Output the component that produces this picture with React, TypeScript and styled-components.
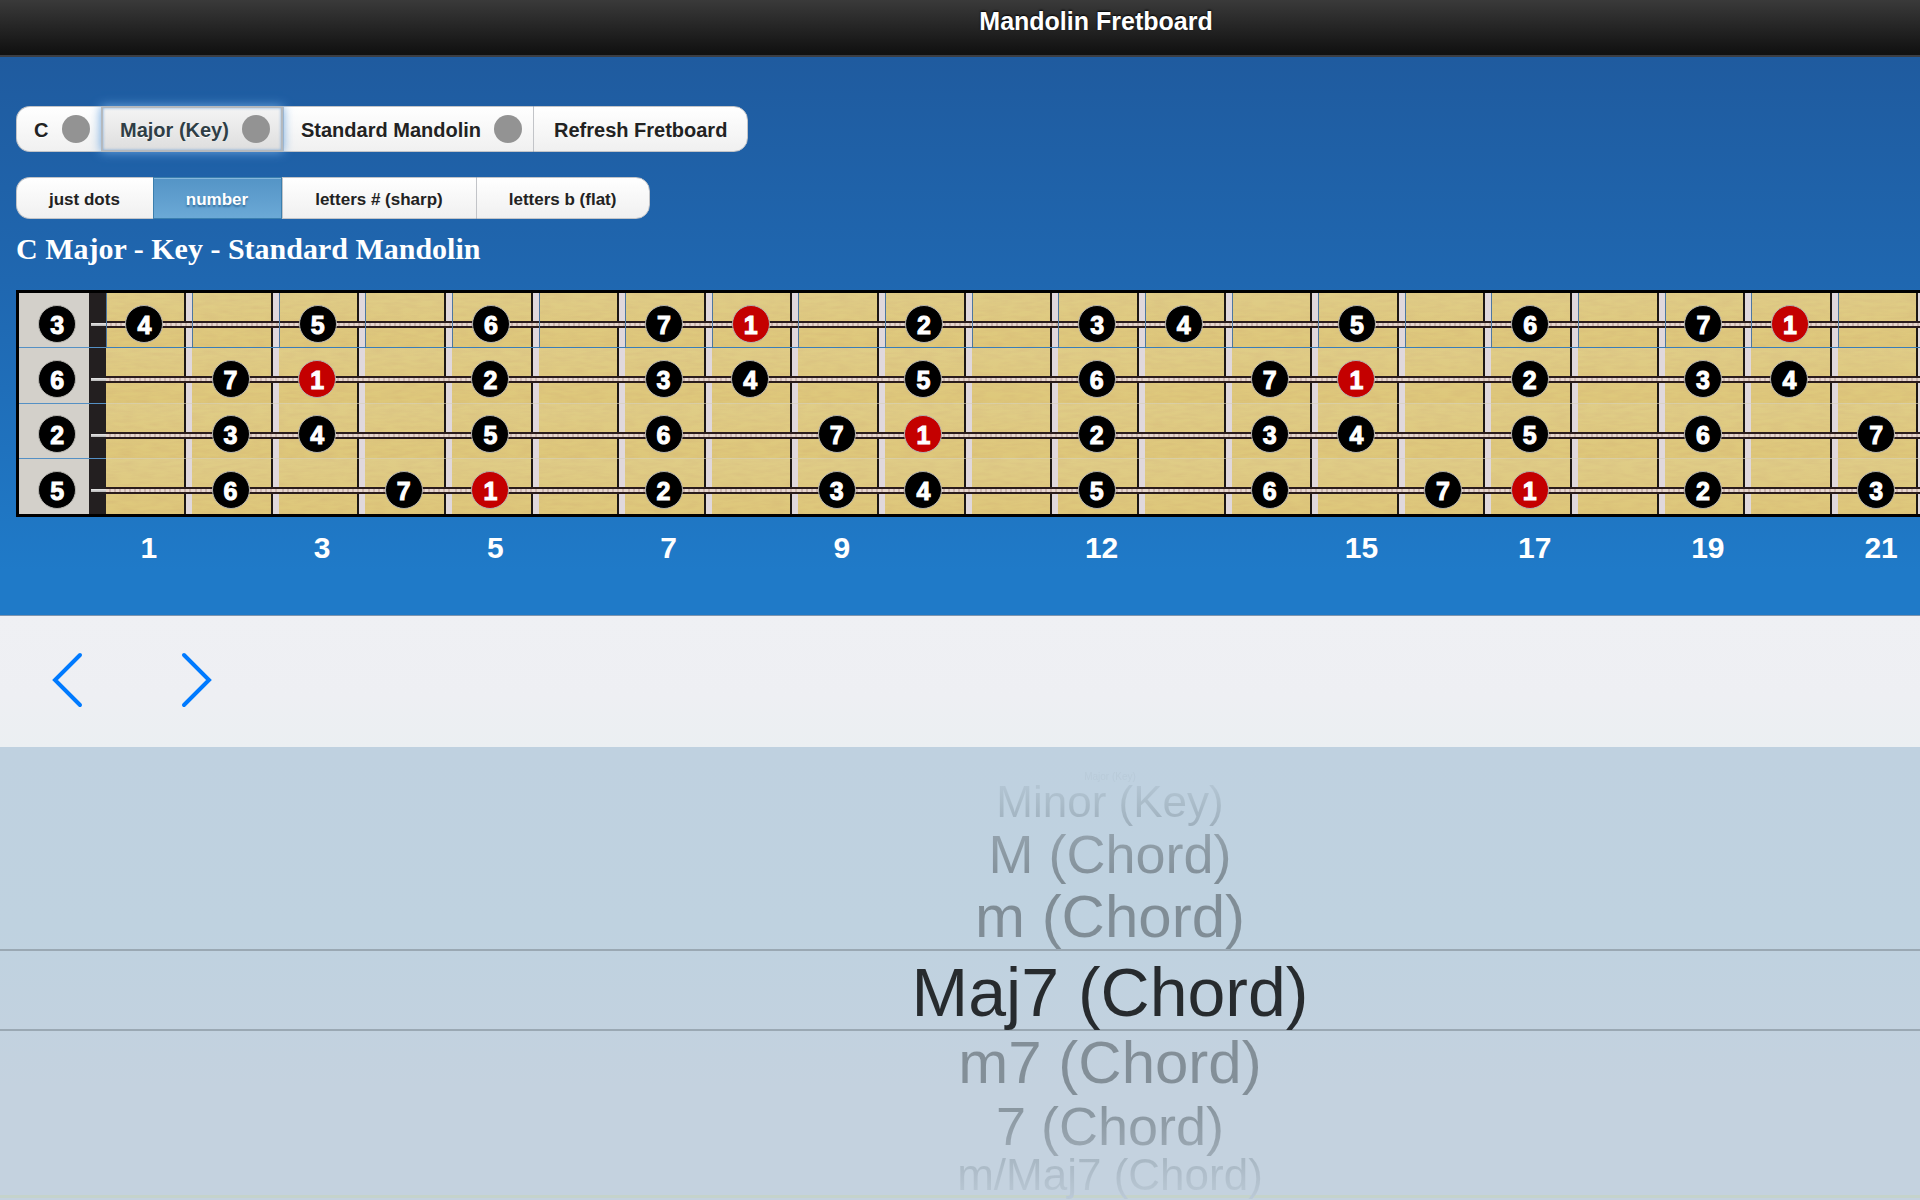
import React, { useState } from "react";
import styled, { createGlobalStyle, css } from "styled-components";

const sans = `"Liberation Sans", Arial, Helvetica, sans-serif`;
const serif = `"Liberation Serif", "Times New Roman", serif`;

const GlobalStyle = createGlobalStyle`
  *, *::before, *::after { box-sizing: border-box; }
  body { margin: 0; background: #c3d2df; font-family: ${sans}; }
`;

const Page = styled.div`
  min-height: 100vh;
  display: flex;
  flex-direction: column;
  overflow: hidden;
`;

const TitleBar = styled.header`
  height: 57px;
  padding: 7px 0 0 272px;
  background: linear-gradient(#3a3a3a, #111 96%);
  border-bottom: 2px solid #3b3d42;
`;

const Title = styled.h1`
  margin: 0;
  text-align: center;
  color: #fff;
  font-size: 25px;
  line-height: 28px;
  text-shadow: 0 -1px 2px #000;
`;

const Stage = styled.main`
  padding: 49px 0 0 16px;
  height: 559px;
  background: linear-gradient(#1f5b9f, #1f67b0 40%, #1f7ac8 92%);
  border-bottom: 1px solid #7d95b0;
`;

const Controls = styled.form`
  display: flex;
  flex-direction: column;
  align-items: flex-start;
  gap: 25px;
`;

const Group = styled.div`
  display: flex;
  margin: 0;
  padding: 0;
`;

const segment = css`
  border: 1px solid #c2c4c8;
  border-right-width: 0;
  background: linear-gradient(#fff, #f0f0f0);
  color: #222;
  font-family: ${sans};
  font-weight: bold;
`;

const groupEnds = css`
  &:first-child { border-radius: 14px 0 0 14px; }
  &:last-child { border-radius: 0 14px 14px 0; border-right-width: 1px; }
`;

const Picker = styled.label<{ $active?: boolean }>`
  ${segment}
  ${groupEnds}
  position: relative;
  display: flex;
  height: 46px;
  ${(p) =>
    p.$active &&
    css`
      z-index: 1;
      border: 2px solid #b4b9be;
      background: linear-gradient(#f4f4f4, #dedede);
      box-shadow: 0 0 10px #6aa5e0, inset 0 0 3px #7aa9dc;
    `}
  &::after {
    content: "";
    position: absolute;
    right: 11px;
    top: 50%;
    width: 28px;
    height: 28px;
    margin-top: -14px;
    border-radius: 50%;
    background: #939393;
    pointer-events: none;
  }
`;

const Select = styled.select<{ $active?: boolean }>`
  appearance: none;
  border: 0;
  outline: 0;
  margin: 0;
  padding: 2px 52px 0 17px;
  background: transparent;
  color: ${(p) => (p.$active ? "#2f3e46" : "#222")};
  font-family: ${sans};
  font-size: 20px;
  font-weight: bold;
  text-shadow: 0 1px 0 #fff;
`;

const RefreshButton = styled.button`
  ${segment}
  ${groupEnds}
  height: 46px;
  padding: 2px 20px 0;
  font-size: 20px;
`;

const HiddenRadio = styled.input`
  position: absolute;
  opacity: 0;
  width: 1px;
  height: 1px;
  margin: 0;
`;

const Tab = styled.label<{ $on: boolean }>`
  ${segment}
  ${groupEnds}
  height: 42px;
  padding: 2px 33px 0 32px;
  font-size: 17px;
  line-height: 40px;
  ${(p) =>
    p.$on &&
    css`
      border-color: #3b7fae;
      border-right-width: 1px;
      background: linear-gradient(#5494c6, #6ba9d6);
      box-shadow: inset 0 1px 0 #86b7dc;
      color: #fff;
      text-shadow: 0 2px 2px #2f6c9c;
    `}
`;

const Heading = styled.h2`
  margin: 13px 0 0;
  color: #fff;
  font-family: ${serif};
  font-size: 30px;
  line-height: 34px;
`;

const Neck = styled.div`
  width: calc(100% + 94px);
  margin-top: 24px;
`;

const Board = styled.div`
  position: relative;
  height: 227px;
  display: grid;
  grid-template-columns: repeat(23, 1fr);
  grid-template-rows: repeat(4, 1fr);
  border: 3px solid #000;
  background: #dec980;
`;

const Grain = styled.svg`
  position: absolute;
  left: 0;
  top: 0;
  width: 100%;
  height: 100%;
`;

const Cell = styled.div<{ $string: number }>`
  position: relative;
  display: flex;
  align-items: center;
  justify-content: center;
  padding: 7px 10px 0 0;
  border-bottom: 1px solid ${(p) => (p.$string === 0 ? "#3a7db8" : "rgba(214, 208, 185, 0.6)")};
  border-left: ${(p) => (p.$string === 0 ? "1px solid rgba(40, 95, 145, 0.8)" : "0")};
  background:
    linear-gradient(#2b1c1c 2px, transparent 2px, transparent 5px, #2b1c1c 5px) 0 28px / 100% 7px no-repeat,
    repeating-linear-gradient(90deg, #e6d6cd 0 3px, #cdb7b0 3px 5px) 0 28px / 100% 7px no-repeat,
    linear-gradient(90deg, transparent calc(100% - 8px), #1d1714 calc(100% - 8px), #1d1714 calc(100% - 6px), #e0d8dc calc(100% - 6px)),
    linear-gradient(rgba(226, 210, 146, 0.4), rgba(222, 196, 112, 0.4));
  &:nth-last-child(-n + 23) { border-bottom: 0; }
`;

const OpenCell = styled(Cell)`
  border-left: 0;
  border-bottom: 1px solid #5590c4;
  background:
    linear-gradient(#e8e8e8, #b9b9b9) 100% 30px / 15px 3px no-repeat,
    linear-gradient(90deg, #d3d0ca calc(100% - 17px), #231f20 calc(100% - 17px));
`;

const Dot = styled.span<{ $root: boolean }>`
  width: 38px;
  height: 38px;
  flex: none;
  border: 1px solid #b5b3ae;
  border-radius: 50%;
  background: ${(p) => (p.$root ? "#c40000" : "#000")};
  color: #fff;
  font-size: 25px;
  font-weight: bold;
  line-height: 38px;
  text-align: center;
  -webkit-text-stroke: 1px #fff;
`;

const Positions = styled.div`
  display: grid;
  grid-template-columns: repeat(23, 1fr);
  padding: 13px 3px 0;
  color: #fff;
  font-size: 30px;
  font-weight: bold;
  line-height: 36px;
  text-align: center;
`;

const Assistant = styled.nav`
  display: flex;
  align-items: center;
  gap: 64px;
  height: 131px;
  padding: 0 32px 5px;
  background: linear-gradient(#eff0f4, #eeeff3 60%, #ebeff2);
`;

const StepButton = styled.button`
  width: 65px;
  height: 65px;
  padding: 0;
  border: 0;
  background: transparent;
  svg { display: block; width: 65px; height: 65px; }
`;

const Wheel = styled.fieldset`
  flex: 1;
  min-width: 0;
  margin: 0;
  padding: 26px 0 0;
  border: 0;
  background: linear-gradient(#bfd1e0, #bfd2e0 40%, #c4d2df 75%, #c4d2df);
`;

const WheelRow = styled.label<{ $height: number; $size: number; $from: string; $to: string }>`
  display: flex;
  align-items: center;
  justify-content: center;
  height: ${(p) => p.$height}px;
  padding-left: 300px;
  font-size: ${(p) => p.$size}px;
  line-height: ${(p) => p.$size + 8}px;
  span {
    background: linear-gradient(${(p) => p.$from}, ${(p) => p.$to});
    background-clip: text;
    -webkit-background-clip: text;
    color: transparent;
  }
`;

const SelectedRow = styled(WheelRow)`
  padding-top: 4px;
  border-top: 2px solid #9aa8b3;
  border-bottom: 2px solid #9aa8b3;
`;

const WheelEdge = styled.div`
  height: 3px;
  margin-top: 2px;
  background: #c5d3cb;
`;

/* Scale degree per fret for each string, open string first. */
const strings: Record<number, number>[] = [
  { 0: 3, 1: 4, 3: 5, 5: 6, 7: 7, 8: 1, 10: 2, 12: 3, 13: 4, 15: 5, 17: 6, 19: 7, 20: 1 },
  { 0: 6, 2: 7, 3: 1, 5: 2, 7: 3, 8: 4, 10: 5, 12: 6, 14: 7, 15: 1, 17: 2, 19: 3, 20: 4 },
  { 0: 2, 2: 3, 3: 4, 5: 5, 7: 6, 9: 7, 10: 1, 12: 2, 14: 3, 15: 4, 17: 5, 19: 6, 21: 7 },
  { 0: 5, 2: 6, 4: 7, 5: 1, 7: 2, 9: 3, 10: 4, 12: 5, 14: 6, 16: 7, 17: 1, 19: 2, 21: 3 },
];
const frets = Array.from({ length: 23 }, (_, i) => i);
const marked = [1, 3, 5, 7, 9, 12, 15, 17, 19, 21];
const modes = ["just dots", "number", "letters # (sharp)", "letters b (flat)"];

const chords = [
  { name: "Major (Key)", height: 8, size: 10, from: "#b9cbd9", to: "#b7c9d7", row: WheelRow },
  { name: "Minor (Key)", height: 42, size: 44, from: "#b8cad8", to: "#9eafbc", row: WheelRow },
  { name: "M (Chord)", height: 62, size: 54, from: "#98a7b2", to: "#7f8c95", row: WheelRow },
  { name: "m (Chord)", height: 64, size: 60, from: "#808d96", to: "#808d96", row: WheelRow },
  { name: "Maj7 (Chord)", height: 82, size: 68, from: "#272b2e", to: "#272b2e", row: SelectedRow },
  { name: "m7 (Chord)", height: 64, size: 60, from: "#838f98", to: "#838f98", row: WheelRow },
  { name: "7 (Chord)", height: 62, size: 54, from: "#84919a", to: "#9eabb6", row: WheelRow },
  { name: "m/Maj7 (Chord)", height: 36, size: 44, from: "#a4b3bf", to: "#bccad7", row: WheelRow },
];

export default function App() {
  const [mode, setMode] = useState("number");
  const [chord, setChord] = useState("Maj7 (Chord)");

  return (
    <Page>
      <GlobalStyle />
      <TitleBar>
        <Title>Mandolin Fretboard</Title>
      </TitleBar>
      <Stage>
        <Controls onSubmit={(e) => e.preventDefault()}>
          <Group>
            <Picker>
              <Select aria-label="Root">
                <option>C</option>
              </Select>
            </Picker>
            <Picker $active>
              <Select aria-label="Scale" $active>
                <option>Major (Key)</option>
              </Select>
            </Picker>
            <Picker>
              <Select aria-label="Tuning">
                <option>Standard Mandolin</option>
              </Select>
            </Picker>
            <RefreshButton type="submit">Refresh Fretboard</RefreshButton>
          </Group>
          <Group role="radiogroup" aria-label="Labels">
            {modes.map((m) => (
              <Tab key={m} $on={m === mode}>
                <HiddenRadio type="radio" name="mode" checked={m === mode} onChange={() => setMode(m)} />
                {m}
              </Tab>
            ))}
          </Group>
        </Controls>
        <Heading>C Major - Key - Standard Mandolin</Heading>
        <Neck>
          <Board>
            <Grain aria-hidden="true">
              <filter id="grain" x="0" y="0" width="100%" height="100%">
                <feTurbulence type="fractalNoise" baseFrequency="0.06 0.3" numOctaves="3" seed="4" />
                <feColorMatrix values="0 0 0 0 0.68  0 0 0 0 0.5  0 0 0 0 0.2  1.8 0 0 0 -0.6" />
              </filter>
              <rect width="100%" height="100%" filter="url(#grain)" />
            </Grain>
            {strings.map((notes, s) =>
              frets.map((f) => {
                const Box = f === 0 ? OpenCell : Cell;
                return (
                  <Box key={`${s}-${f}`} $string={s}>
                    {notes[f] && <Dot $root={notes[f] === 1}>{notes[f]}</Dot>}
                  </Box>
                );
              })
            )}
          </Board>
          <Positions>
            {frets.map((f) => (
              <span key={f}>{marked.includes(f) ? f : ""}</span>
            ))}
          </Positions>
        </Neck>
      </Stage>
      <Assistant aria-label="Field navigation">
        <StepButton aria-label="Previous">
          <svg viewBox="0 0 65 65" fill="none" stroke="#007aff" strokeWidth="4" strokeLinecap="round">
            <path d="M48 8 L23 33 L48 58" />
          </svg>
        </StepButton>
        <StepButton aria-label="Next">
          <svg viewBox="0 0 65 65" fill="none" stroke="#007aff" strokeWidth="4" strokeLinecap="round">
            <path d="M23 8 L48 33 L23 58" />
          </svg>
        </StepButton>
      </Assistant>
      <Wheel aria-label="Scale or chord">
        {chords.map(({ name, height, size, from, to, row: Row }) => (
          <Row key={name} $height={height} $size={size} $from={from} $to={to}>
            <HiddenRadio type="radio" name="chord" checked={name === chord} onChange={() => setChord(name)} />
            <span>{name}</span>
          </Row>
        ))}
        <WheelEdge />
      </Wheel>
    </Page>
  );
}
